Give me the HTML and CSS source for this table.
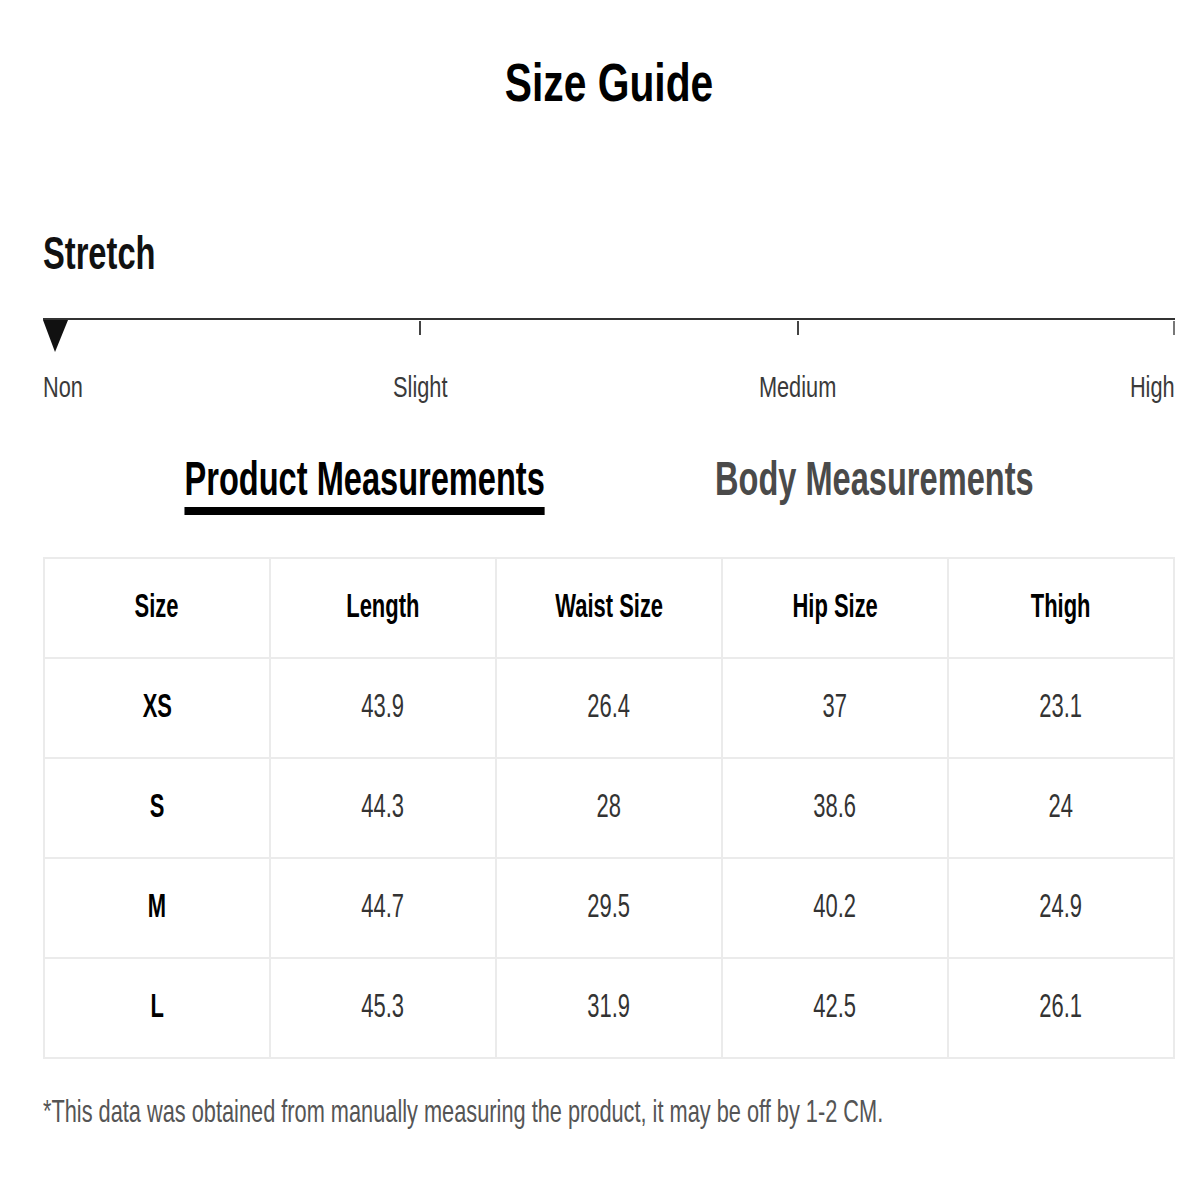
FILE: index.html
```html
<!DOCTYPE html>
<html lang="en">
<head>
<meta charset="utf-8">
<title>Size Guide</title>
<link rel="stylesheet" href="styles.css">
</head>
<body>
<main class="page">
  <h1 class="title">Size Guide</h1>
  <h2 class="section">Stretch</h2>

  <div class="scale">
    <div class="marks">
      <span class="mark mark-start">
        <svg class="pointer" width="25" height="32" viewBox="0 0 25 32"><polygon points="0,0 25,0 12,32" fill="#111"/></svg>
      </span>
      <span class="mark"><i class="tick"></i></span>
      <span class="mark"><i class="tick"></i></span>
      <span class="mark mark-end"><i class="tick tick-light"></i></span>
    </div>
    <div class="labels">
      <span class="lbl lbl-start"><span class="narrow">Non</span></span>
      <span class="lbl"><span class="narrow">Slight</span></span>
      <span class="lbl"><span class="narrow">Medium</span></span>
      <span class="lbl lbl-end"><span class="narrow">High</span></span>
    </div>
  </div>

  <div class="tabs">
    <div class="tab tab-active">Product Measurements</div>
    <div class="tab">Body Measurements</div>
  </div>

  <table class="sizes">
    <thead>
      <tr>
        <th><span class="cell">Size</span></th>
        <th><span class="cell">Length</span></th>
        <th><span class="cell">Waist Size</span></th>
        <th><span class="cell">Hip Size</span></th>
        <th><span class="cell">Thigh</span></th>
      </tr>
    </thead>
    <tbody>
      <tr>
        <th><span class="cell">XS</span></th>
        <td><span class="cell">43.9</span></td>
        <td><span class="cell">26.4</span></td>
        <td><span class="cell">37</span></td>
        <td><span class="cell">23.1</span></td>
      </tr>
      <tr>
        <th><span class="cell">S</span></th>
        <td><span class="cell">44.3</span></td>
        <td><span class="cell">28</span></td>
        <td><span class="cell">38.6</span></td>
        <td><span class="cell">24</span></td>
      </tr>
      <tr>
        <th><span class="cell">M</span></th>
        <td><span class="cell">44.7</span></td>
        <td><span class="cell">29.5</span></td>
        <td><span class="cell">40.2</span></td>
        <td><span class="cell">24.9</span></td>
      </tr>
      <tr>
        <th><span class="cell">L</span></th>
        <td><span class="cell">45.3</span></td>
        <td><span class="cell">31.9</span></td>
        <td><span class="cell">42.5</span></td>
        <td><span class="cell">26.1</span></td>
      </tr>
    </tbody>
  </table>

  <p class="note">*This data was obtained from manually measuring the product, it may be off by 1-2 CM.</p>
</main>
</body>
</html>
```

FILE: styles.css
```css
* {
  box-sizing: border-box;
}

html, body {
  margin: 0;
  padding: 0;
  background: #fff;
}

body {
  font-family: "Liberation Sans", Arial, Helvetica, sans-serif;
  color: #111;
}

.page {
  padding: 0 25px 40px 43px;
}

.title {
  margin: 53px 0 0;
  font-size: 53px;
  line-height: 60px;
  font-weight: 700;
  text-align: center;
  color: #000;
  white-space: nowrap;
  transform: scaleX(0.77);
}

.section {
  margin: 115px 0 0;
  font-size: 46px;
  line-height: 50px;
  font-weight: 700;
  color: #111;
  transform: scaleX(0.71);
  transform-origin: left center;
}

.scale {
  margin-top: 40px;
}

.marks {
  display: flex;
  justify-content: space-between;
  height: 36px;
  border-top: 2px solid #333;
}

.mark {
  width: 0;
  display: flex;
  justify-content: center;
  align-items: flex-start;
}

.mark-start {
  justify-content: flex-start;
}

.mark-end {
  justify-content: flex-end;
}

.pointer {
  display: block;
  flex: none;
}

.tick {
  display: block;
  flex: none;
  width: 2px;
  height: 14px;
  margin-top: 1px;
  background: #444;
}

.tick-light {
  background: #777;
}

.labels {
  display: flex;
  justify-content: space-between;
  margin-top: 18px;
  font-size: 29px;
  line-height: 30px;
  color: #3a3a3a;
}

.lbl {
  width: 0;
  display: flex;
  justify-content: center;
  white-space: nowrap;
}

.lbl-start {
  justify-content: flex-start;
}

.lbl-end {
  justify-content: flex-end;
}

.narrow {
  display: inline-block;
  flex: none;
  transform: scaleX(0.75);
}

.lbl-start .narrow {
  transform-origin: left center;
}

.lbl-end .narrow {
  transform-origin: right center;
}

.tabs {
  display: flex;
  justify-content: center;
  gap: 15px;
  padding-right: 10px;
  margin-top: 53px;
}

.tab {
  flex: none;
  font-size: 47.5px;
  line-height: 48px;
  font-weight: 700;
  color: #4a4a4a;
  padding-bottom: 4px;
  border-bottom: 8px solid transparent;
  white-space: nowrap;
  transform: scaleX(0.686);
}

.tab-active {
  color: #000;
  border-bottom-color: #000;
}

.sizes {
  width: 1132px;
  margin-top: 42px;
  border-collapse: collapse;
  table-layout: fixed;
}

.sizes th,
.sizes td {
  height: 100px;
  padding: 0 0 5px;
  border: 2px solid #ebebeb;
  text-align: center;
  vertical-align: middle;
  font-size: 33.5px;
  line-height: 36px;
  white-space: nowrap;
}

.sizes th {
  font-weight: 700;
  color: #000;
}

.sizes td {
  font-weight: 400;
  color: #333;
}

.cell {
  display: inline-block;
  transform: scaleX(0.655);
}

.note {
  margin: 36px 0 0;
  font-size: 32px;
  line-height: 32px;
  color: #555;
  white-space: nowrap;
  transform: scaleX(0.68);
  transform-origin: left center;
}
```
